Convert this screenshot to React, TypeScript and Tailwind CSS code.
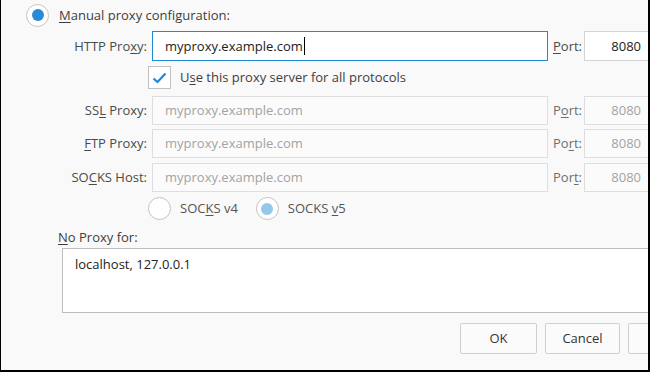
import React from "react";

const font = { fontFamily: '"Open Sans", "Noto Sans", sans-serif' };

function U({ children }: { children: React.ReactNode }) {
  return <span className="underline underline-offset-2 decoration-1">{children}</span>;
}

function Radio({ checked, disabled }: { checked?: boolean; disabled?: boolean }) {
  return (
    <span className="w-[23px] h-[23px] rounded-full border border-[#c4c4c4] bg-white flex items-center justify-center shrink-0">
      {checked && (
        <span className={`w-[12px] h-[12px] rounded-full ${disabled ? "bg-[#92c9ea]" : "bg-[#2a8ad6]"}`} />
      )}
    </span>
  );
}

function ProxyRow({
  label,
  port,
  value,
  focused,
  className,
}: {
  label: React.ReactNode;
  port: React.ReactNode;
  value: string;
  focused?: boolean;
  className: string;
}) {
  return (
    <div className={`flex items-center ${className}`}>
      <div className="w-[147px] shrink-0 text-right text-[#4a4a4a] pr-[1px]">{label}</div>
      <div
        className={`ml-[4px] w-[396px] shrink-0 h-full flex items-center pl-[12px] border ${
          focused ? "border-[#1f8ad6] bg-white text-[#222]" : "border-[#dedede] bg-[#fbfbfb] text-[#a3a3a3]"
        }`}
      >
        {value}
        {focused && <span className="w-px h-[18px] bg-black ml-[1px]" />}
      </div>
      <div className={`ml-[5px] w-[28px] shrink-0 ${focused ? "text-[#4a4a4a]" : "text-[#6e6e6e]"}`}>{port}</div>
      <div
        className={`ml-[3px] w-[80px] shrink-0 h-full flex items-center justify-end pr-[22px] border ${
          focused ? "border-[#d4d4d4] bg-white text-[#222]" : "border-[#dedede] bg-[#fbfbfb] text-[#a3a3a3]"
        }`}
      >
        8080
      </div>
    </div>
  );
}

export default function App() {
  return (
    <div
      className="w-[650px] h-[372px] bg-[#f9f9f9] border-l border-r-2 border-b-2 border-black overflow-hidden text-[13px] leading-none"
      style={font}
    >
      {/* Manual proxy radio */}
      <div className="flex items-center h-[22px] mt-[4px] pl-[25px]">
        <Radio checked />
        <span className="ml-[10px] text-[#3e3e3e]">
          <U>M</U>anual proxy configuration:
        </span>
      </div>

      <ProxyRow
        className="h-[30px] mt-[5px]"
        label={<>HTTP Pro<U>x</U>y:</>}
        port={<><U>P</U>ort:</>}
        value="myproxy.example.com"
        focused
      />

      {/* Use for all protocols */}
      <div className="flex items-center h-[23px] mt-[5px] pl-[147px]">
        <span className="w-[23px] h-[23px] shrink-0 border border-[#c0c0c0] bg-white flex items-center justify-center">
          <svg width="15" height="12" viewBox="0 0 15 12">
            <path d="M1.5 6.5 L5.5 10 L13.5 1.5" fill="none" stroke="#1f8ad6" strokeWidth="2.2" />
          </svg>
        </span>
        <span className="ml-[9px] text-[#3e3e3e]">
          U<U>s</U>e this proxy server for all protocols
        </span>
      </div>

      <ProxyRow
        className="h-[29px] mt-[7px]"
        label={<>SS<U>L</U> Proxy:</>}
        port={<>P<U>o</U>rt:</>}
        value="myproxy.example.com"
      />
      <ProxyRow
        className="h-[29px] mt-[4px]"
        label={<><U>F</U>TP Proxy:</>}
        port={<>Po<U>r</U>t:</>}
        value="myproxy.example.com"
      />
      <ProxyRow
        className="h-[29px] mt-[5px]"
        label={<>SO<U>C</U>KS Host:</>}
        port={<>Por<U>t</U>:</>}
        value="myproxy.example.com"
      />

      {/* SOCKS version */}
      <div className="flex items-center h-[23px] mt-[5px] pl-[147px] text-[#555]">
        <Radio />
        <span className="ml-[9px]">
          SOC<U>K</U>S v4
        </span>
        <span className="ml-[18px]">
          <Radio checked disabled />
        </span>
        <span className="ml-[9px]">
          SOCKS <U>v</U>5
        </span>
      </div>

      {/* No proxy for */}
      <div className="mt-[10px] pl-[57px] h-[14px] flex items-center text-[#3e3e3e]">
        <U>N</U>o Proxy for:
      </div>
      <div className="mt-[4px] ml-[61px] w-[620px] h-[65px] border border-[#bdbdbd] bg-white pl-[12px] pt-[9px] text-[#222]">
        localhost, 127.0.0.1
      </div>

      {/* Buttons */}
      <div className="flex mt-[10px] ml-[459px] gap-[8px] text-[#333]">
        <button className="w-[77px] h-[31px] shrink-0 border border-[#cfcfcf] rounded-[2px] bg-[#fbfbfb]">OK</button>
        <button className="w-[75px] h-[31px] shrink-0 border border-[#cfcfcf] rounded-[2px] bg-[#fbfbfb]">Cancel</button>
        <button className="w-[75px] h-[31px] shrink-0 border border-[#cfcfcf] rounded-[2px] bg-[#fbfbfb]" />
      </div>
    </div>
  );
}
